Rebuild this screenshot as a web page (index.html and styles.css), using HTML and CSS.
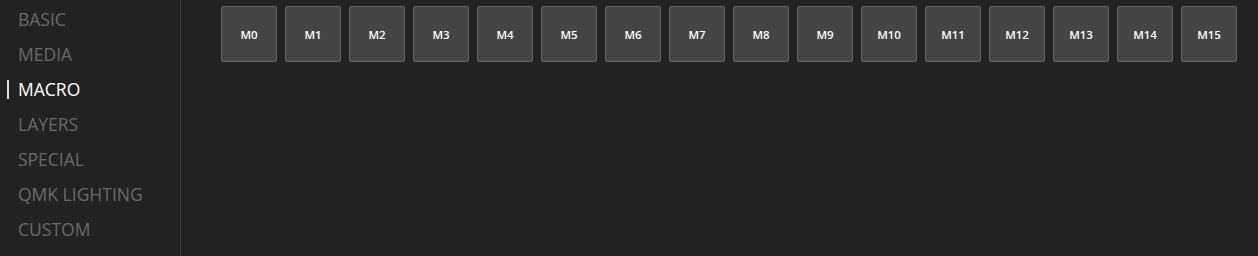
FILE: index.html
```html
<!DOCTYPE html>
<html lang="en">
<head>
    <meta charset="UTF-8">
    <title>Macro Keys</title>
    <link rel="stylesheet" href="styles.css">
</head>
<body>

<div class="layout">
    <div class="menu">
        <div class="menu-item">BASIC</div>
        <div class="menu-item">MEDIA</div>
        <div class="menu-item active">MACRO</div>
        <div class="menu-item">LAYERS</div>
        <div class="menu-item">SPECIAL</div>
        <div class="menu-item">QMK LIGHTING</div>
        <div class="menu-item">CUSTOM</div>
    </div>

    <div class="keys">
        <div class="key">M0</div>
        <div class="key">M1</div>
        <div class="key">M2</div>
        <div class="key">M3</div>
        <div class="key">M4</div>
        <div class="key">M5</div>
        <div class="key">M6</div>
        <div class="key">M7</div>
        <div class="key">M8</div>
        <div class="key">M9</div>
        <div class="key">M10</div>
        <div class="key">M11</div>
        <div class="key">M12</div>
        <div class="key">M13</div>
        <div class="key">M14</div>
        <div class="key">M15</div>
    </div>
</div>

</body>
</html>
```

FILE: styles.css
```css
body {
    margin: 0;
    background-color: #222222;
    font-family: "Open Sans", sans-serif;
    height: 256px;
    overflow: hidden;
}
.layout {
    display: flex;
    height: 256px;
}
.menu {
    width: 180px;
    border-right: 1px solid #3a3a3a;
    padding-top: 2px;
}
.menu-item {
    height: 35px;
    line-height: 35px;
    padding-left: 18px;
    font-size: 17.5px;
    color: #6a6a6a;
    position: relative;
}
.menu-item.active {
    color: #ffffff;
}
.menu-item.active::before {
    content: "";
    position: absolute;
    left: 7px;
    top: 8px;
    width: 2px;
    height: 19px;
    background: #e0e0e0;
}
.keys {
    display: flex;
    align-items: flex-start;
    gap: 8px;
    padding: 6px 0 0 40px;
}
.key {
    width: 54px;
    height: 54px;
    background: #444444;
    border: 1px solid #666666;
    border-radius: 2px;
    color: #ffffff;
    font-size: 11.5px;
    font-weight: 600;
    display: flex;
    align-items: center;
    justify-content: center;
}
```
